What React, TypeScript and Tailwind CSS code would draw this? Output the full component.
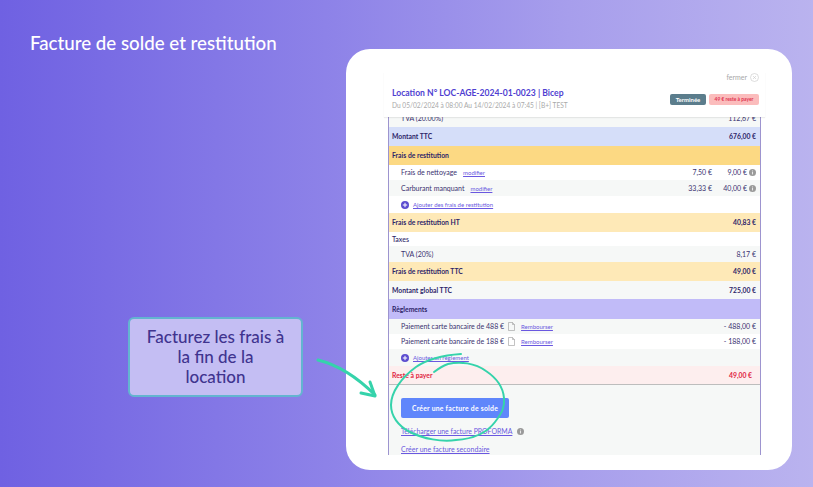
const font = { fontFamily: "Lato, 'Noto Sans', sans-serif" };

function Info({ className = "" }: { className?: string }) {
  return (
    <svg width="7" height="7" viewBox="0 0 8 8" className={className}>
      <circle cx="4" cy="4" r="4" fill="#9a9a9a" />
      <rect x="3.4" y="3.4" width="1.2" height="2.8" fill="#e8e8e8" />
      <rect x="3.4" y="1.7" width="1.2" height="1.1" fill="#e8e8e8" />
    </svg>
  );
}

function Plus() {
  return (
    <svg width="8" height="8" viewBox="0 0 8 8" className="shrink-0">
      <circle cx="4" cy="4" r="4" fill="#5b4ccf" />
      <path d="M4 1.8V6.2M1.8 4H6.2" stroke="#fff" strokeWidth="1" />
    </svg>
  );
}

function Doc() {
  return (
    <svg width="7" height="9" viewBox="0 0 7 9" fill="none" className="shrink-0">
      <path d="M.5.5H4.5L6.5 2.5V8.5H.5Z M4.5.5V2.5H6.5" stroke="#9b9b9b" strokeWidth=".6" />
    </svg>
  );
}

function Row({ label, value, className }: { label: string; value: string; className: string }) {
  return (
    <div className={`flex items-center justify-between pl-[3px] pr-[4px] font-bold text-[#2e2569] text-[6.8px] ${className}`}>
      <span>{label}</span>
      <span>{value}</span>
    </div>
  );
}

function Sub({ children, right, className }: { children: React.ReactNode; right: React.ReactNode; className: string }) {
  return (
    <div className={`flex items-center justify-between pl-[12px] pr-[4px] text-[7px] text-[#3a3270] ${className}`}>
      <div className="flex items-center">{children}</div>
      <div className="flex items-center">{right}</div>
    </div>
  );
}

function Amounts({ ht, ttc }: { ht: string; ttc: string }) {
  return (
    <>
      <span>{ht}</span>
      <span className="ml-[10px] w-[25px] whitespace-nowrap text-right">{ttc}</span>
      <Info className="ml-[2px]" />
    </>
  );
}

const link = "text-[6px] text-[#6a58e0] underline";

export default function App() {
  return (
    <div style={font} className="relative h-[487px] w-[813px] overflow-hidden flex bg-[linear-gradient(90deg,#6f61e2_0%,#8d82e8_40%,#a79eec_70%,#bab3ef_100%)]">
      <div className="w-[346px] shrink-0 pl-[30px] pt-[32px]">
        <h1 className="text-[18.7px] leading-[22px] font-medium text-white">Facture de solde et restitution</h1>
        <div className="ml-[98px] mt-[263px] flex h-[80px] w-[175px] items-center justify-center rounded-[6px] border-2 border-[#63b4d0] bg-[#c4bef3] pb-[1px] text-center text-[17px] font-medium leading-[20px] text-[#40348f]">
          <span>Facturez les frais à<br />la fin de la<br />location</span>
        </div>
      </div>

      <div className="mt-[49px] h-[421px] w-[446px] rounded-[24px] bg-white pl-[38px] pr-[27px] pt-[23px]">
        <div className="relative z-10 h-[45px] bg-white shadow-[0_1px_1px_rgba(0,0,0,0.07)] flex flex-col pl-[8px] pr-[6px]">
          <div className="flex h-[10px] items-center justify-end gap-[3px] text-[7px] text-[#a8a8a8]">
            <span>fermer</span>
            <svg width="9" height="9" viewBox="0 0 9 9" fill="none">
              <circle cx="4.5" cy="4.5" r="4" stroke="#c8c8c8" strokeWidth=".6" />
              <path d="M3 3L6 6M6 3L3 6" stroke="#c8c8c8" strokeWidth=".6" />
            </svg>
          </div>
          <div className="flex items-start justify-between">
            <div>
              <div className="text-[8.6px] leading-[14px] font-bold text-[#4f3fd1] mt-[4px]">Location N° LOC-AGE-2024-01-0023 | Bicep</div>
              <div className="mt-[1px] text-[6.6px] leading-[9px] text-[#a9a9a9]">Du 05/02/2024 à 08:00 Au 14/02/2024 à 07:45 | [B+] TEST</div>
            </div>
            <div className="flex items-center gap-[3px] mt-[12px]">
              <span className="flex h-[11px] w-[36px] items-center justify-center rounded-[2px] bg-[#5b7d8c] text-[6px] font-bold text-white">Terminée</span>
              <span className="flex h-[11px] w-[50px] items-center justify-center rounded-[2px] bg-[#fbbcbc] text-[4.9px] font-bold text-[#e0324f]">49 € reste à payer</span>
            </div>
          </div>
        </div>

        <div className="h-[338px] w-[373px] ml-[4px] overflow-hidden border-x border-[#9d94cf] bg-white">
          <div className="h-[10px] overflow-hidden bg-[#f6f8f7]">
            <div className="mt-[-3px] flex justify-between pl-[12px] pr-[4px] text-[7px] leading-[9px] text-[#3a3270]"><span>TVA (20.00%)</span><span>112,67 €</span></div>
          </div>
          <Row label="Montant TTC" value="676,00 €" className="h-[19px] bg-[#d5def9]" />
          <Row label="Frais de restitution" value="" className="h-[19px] bg-[#fcd983]" />
          <Sub className="h-[15px] bg-white" right={<Amounts ht="7,50 €" ttc="9,00 €" />}>
            <span>Frais de nettoyage</span><span className={`${link} ml-[6px]`}>modifier</span>
          </Sub>
          <Sub className="h-[16px] bg-[#f6f8f7]" right={<Amounts ht="33,33 €" ttc="40,00 €" />}>
            <span>Carburant manquant</span><span className={`${link} ml-[6px]`}>modifier</span>
          </Sub>
          <div className="flex h-[17px] items-center gap-[4px] bg-white pl-[12px]">
            <Plus /><span className={link}>Ajouter des frais de restitution</span>
          </div>
          <Row label="Frais de restitution HT" value="40,83 €" className="h-[19px] bg-[#fee9b7]" />
          <div className="flex h-[14px] items-center bg-white pl-[3px] text-[7px] font-medium text-[#2e2569]">Taxes</div>
          <Sub className="h-[16px] bg-[#f6f8f7]" right={<span>8,17 €</span>}><span>TVA (20%)</span></Sub>
          <Row label="Frais de restitution TTC" value="49,00 €" className="h-[19px] bg-[#fee9b7]" />
          <Row label="Montant global TTC" value="725,00 €" className="h-[18px] bg-[#f6f8f7]" />
          <Row label="Règlements" value="" className="h-[20px] bg-[#c1bbf8]" />
          <Sub className="h-[15px] bg-[#f6f8f7]" right={<span>- 488,00 €</span>}>
            <span>Paiement carte bancaire de 488 €</span><span className="ml-[4px]"><Doc /></span><span className={`${link} ml-[6px]`}>Rembourser</span>
          </Sub>
          <Sub className="h-[15px] bg-white" right={<span>- 188,00 €</span>}>
            <span>Paiement carte bancaire de 188 €</span><span className="ml-[4px]"><Doc /></span><span className={`${link} ml-[6px]`}>Rembourser</span>
          </Sub>
          <div className="flex h-[17px] items-center gap-[4px] bg-[#f6f8f7] pl-[12px]">
            <Plus /><span className={link}>Ajouter un règlement</span>
          </div>
          <div className="flex h-[19px] items-center justify-between border-b border-[#bdbdbd] bg-[#fdeeee] pl-[3px] pr-[8px] text-[6.8px] font-bold text-[#e0233f]">
            <span>Reste à payer</span><span>49,00 €</span>
          </div>
          <div className="h-[71px] bg-[#f6f8f7] pl-[12px] pt-[13px]">
            <div className="flex h-[20px] w-[108px] items-center justify-center rounded-[2px] bg-[#5f86fb] text-[6.8px] font-bold text-white tracking-[0.25px]">Créer une facture de solde</div>
            <div className="mt-[6px] flex h-[14px] items-center gap-[5px]">
              <span className="text-[6.9px] text-[#6a58e0] underline">Télécharger une facture PROFORMA</span><Info />
            </div>
            <div className="mt-[6px] text-[7px] leading-[10px] text-[#6a58e0] underline">Créer une facture secondaire</div>
          </div>
        </div>
      </div>

      <svg className="absolute left-[310px] top-[350px]" width="210" height="100" viewBox="0 0 210 100" fill="none">
        <path d="M8 10C24 14 44 24 65 45" stroke="#35d3ab" strokeWidth="3" strokeLinecap="round" />
        <path d="M60 32L65 46L51 43" stroke="#35d3ab" strokeWidth="3" strokeLinecap="round" strokeLinejoin="round" />
        <path d="M151 4C136 5 119 8 106 17C92 27 81 42 81 55C81 66 88 76 100 82C113 89 132 92 146 90C162 89 176 84 185 72C192 63 195 57 194 48C193 36 185 27 176 21C165 13 150 11 138 14C132 16 128 19 124 22" stroke="#35d3ab" strokeWidth="2" strokeLinecap="round" />
      </svg>
    </div>
  );
}
